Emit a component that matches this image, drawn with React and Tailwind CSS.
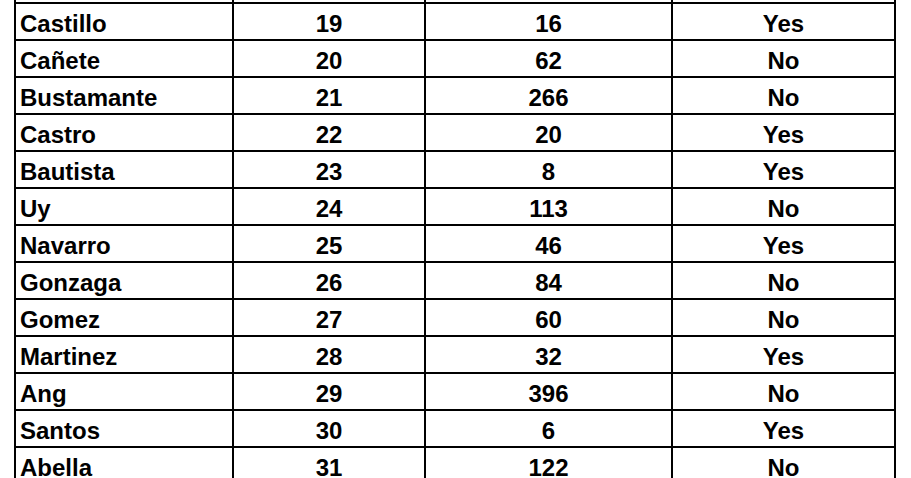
const rows = [
  ["Castillo", 19, 16, "Yes"],
  ["Cañete", 20, 62, "No"],
  ["Bustamante", 21, 266, "No"],
  ["Castro", 22, 20, "Yes"],
  ["Bautista", 23, 8, "Yes"],
  ["Uy", 24, 113, "No"],
  ["Navarro", 25, 46, "Yes"],
  ["Gonzaga", 26, 84, "No"],
  ["Gomez", 27, 60, "No"],
  ["Martinez", 28, 32, "Yes"],
  ["Ang", 29, 396, "No"],
  ["Santos", 30, 6, "Yes"],
  ["Abella", 31, 122, "No"],
];

const cell = "border-r-2 border-black h-[35px] pt-[4px] leading-[31px]";

export default function App() {
  return (
    <div
      className="h-screen overflow-hidden bg-white text-black font-bold text-[24px]"
      style={{ fontFamily: '"Liberation Sans", Arial, sans-serif' }}
    >
      <div className="ml-[14px] w-[882px]">
        {/* tail of the row above, cut off by the window */}
        <div className="flex h-[2px]">
          <div className="w-[220px] border-l-2 border-r-2 border-black" />
          <div className="w-[192px] border-r-2 border-black" />
          <div className="w-[247px] border-r-2 border-black" />
          <div className="w-[223px] border-r-2 border-black" />
        </div>
        {rows.map(([name, id, count, flag]) => (
          <div key={name} className="flex border-t-2 border-black">
            <div className={`w-[220px] border-l-2 pl-[4px] whitespace-nowrap ${cell}`}>{name}</div>
            <div className={`w-[192px] text-center ${cell}`}>{id}</div>
            <div className={`w-[247px] text-center ${cell}`}>{count}</div>
            <div className={`w-[223px] text-center ${cell}`}>{flag}</div>
          </div>
        ))}
      </div>
    </div>
  );
}
